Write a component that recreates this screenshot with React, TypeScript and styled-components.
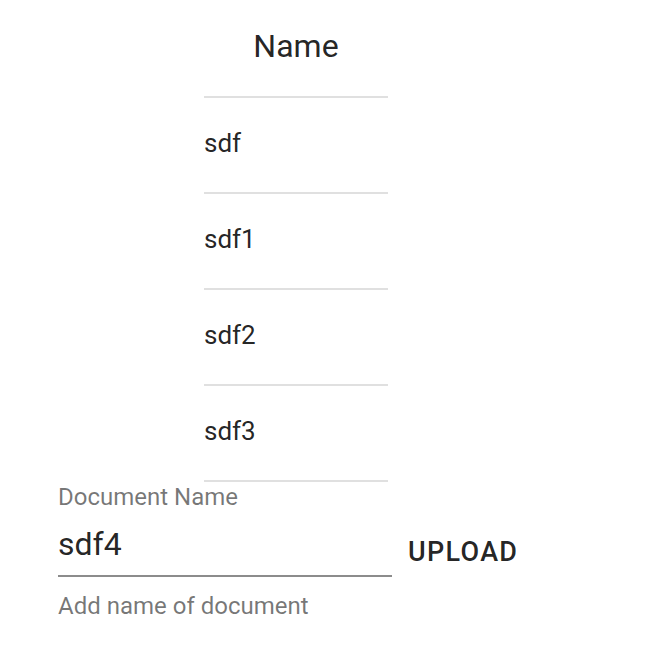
import React, { FC } from 'react';
import styled, { createGlobalStyle } from 'styled-components';

const GlobalStyle = createGlobalStyle`
  html, body {
    margin: 0;
    padding: 0;
    background: #ffffff;
  }
  body {
    font-family: Roboto, "Liberation Sans", Arial, sans-serif;
    color: rgba(0, 0, 0, 0.87);
  }
`;

const Page = styled.div`
  display: flex;
  flex-direction: column;
  width: 650px;
  height: 652px;
`;

const TableWrap = styled.div`
  margin-left: 204px;
  width: 184px;
`;

const Table = styled.table`
  width: 100%;
  border-collapse: collapse;
  border-spacing: 0;
`;

const HeadCell = styled.th`
  height: 92px;
  padding: 0 0 4px;
  font-size: 32px;
  font-weight: 400;
  line-height: 90px;
  text-align: center;
  color: rgba(0, 0, 0, 0.87);
  border-bottom: 2px solid #e0e0e0;
`;

const BodyCell = styled.td`
  height: 91px;
  padding: 0 0 3px;
  font-size: 26px;
  line-height: 91px;
  text-align: left;
  color: rgba(0, 0, 0, 0.87);
  border-bottom: 2px solid #e0e0e0;
`;

const FormRow = styled.div`
  display: flex;
  align-items: center;
  gap: 16px;
  margin-left: 58px;
  margin-top: 3px;
`;

const Field = styled.div`
  display: flex;
  flex-direction: column;
  width: 334px;
`;

const Label = styled.label`
  font-size: 24px;
  line-height: 24px;
  color: rgba(0, 0, 0, 0.54);
  margin-bottom: 4px;
`;

const Input = styled.input`
  font-family: inherit;
  font-size: 32px;
  line-height: 38px;
  height: 38px;
  padding: 12px 0 12px;
  margin: 0;
  border: none;
  border-bottom: 2px solid rgba(0, 0, 0, 0.45);
  outline: none;
  background: transparent;
  color: rgba(0, 0, 0, 0.87);
`;

const Helper = styled.p`
  margin: 17px 0 0;
  font-size: 24px;
  line-height: 24px;
  color: rgba(0, 0, 0, 0.54);
`;

const UploadButton = styled.button`
  font-family: inherit;
  font-size: 27px;
  font-weight: 500;
  letter-spacing: 1.3px;
  text-transform: uppercase;
  color: rgba(0, 0, 0, 0.87);
  background: none;
  border: none;
  padding: 0;
  margin-top: 0;
  cursor: pointer;
`;

const rows = ['sdf', 'sdf1', 'sdf2', 'sdf3'];

const App: FC = () => (
  <>
    <GlobalStyle />
    <Page>
      <TableWrap>
        <Table>
          <thead>
            <tr>
              <HeadCell>Name</HeadCell>
            </tr>
          </thead>
          <tbody>
            {rows.map((r) => (
              <tr key={r}>
                <BodyCell>{r}</BodyCell>
              </tr>
            ))}
          </tbody>
        </Table>
      </TableWrap>
      <FormRow>
        <Field>
          <Label htmlFor="doc-name">Document Name</Label>
          <Input id="doc-name" defaultValue="sdf4" />
          <Helper>Add name of document</Helper>
        </Field>
        <UploadButton>Upload</UploadButton>
      </FormRow>
    </Page>
  </>
);

export default App;
